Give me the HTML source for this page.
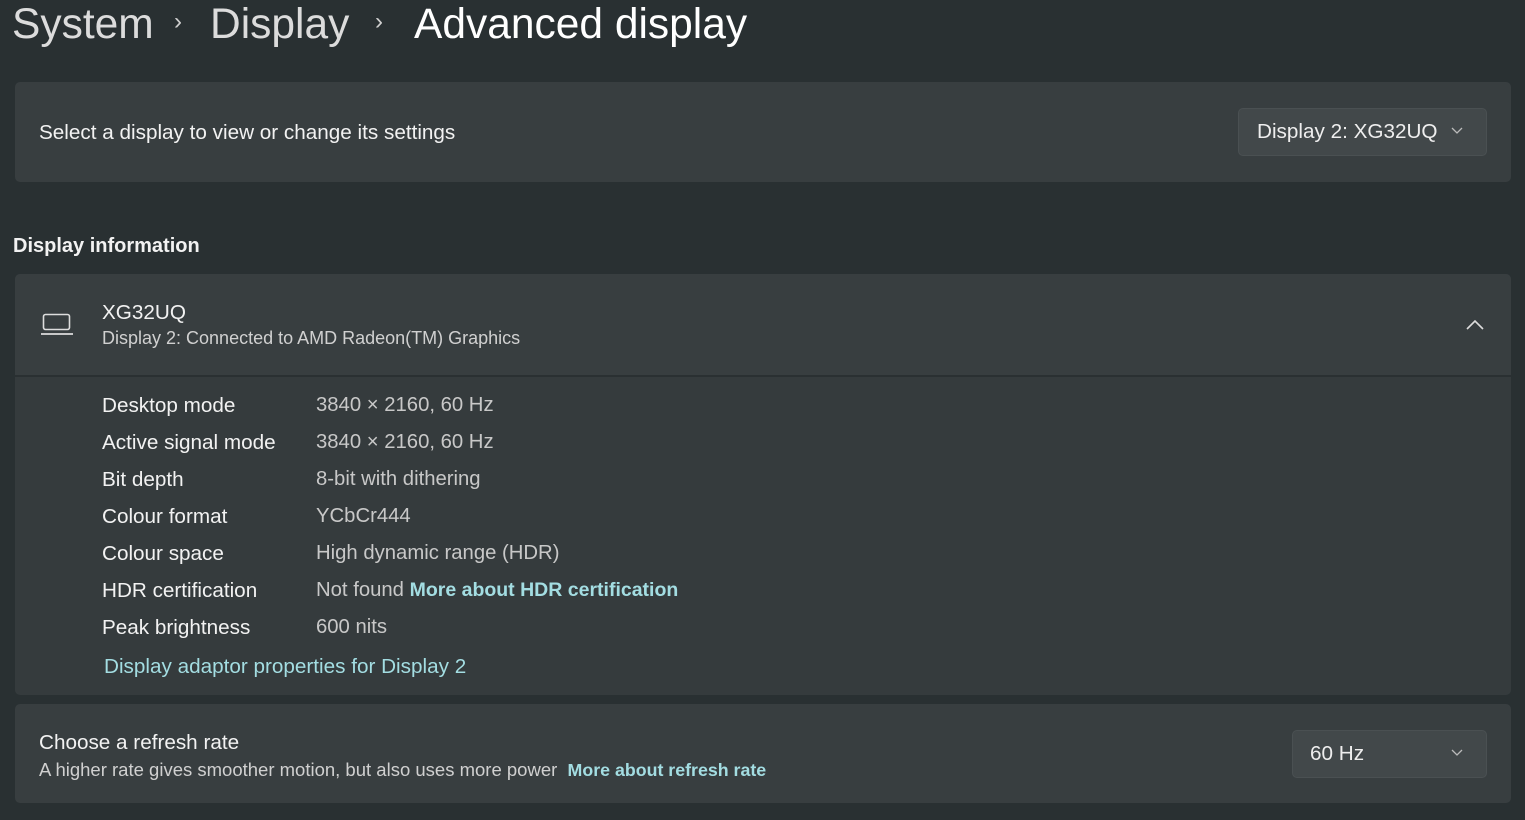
<!DOCTYPE html>
<html><head><meta charset="utf-8"><style>
*{margin:0;padding:0;box-sizing:border-box}
body{width:1525px;height:820px;background:#293032;font-family:"Liberation Sans",sans-serif;color:#fff;position:relative;overflow:hidden}
.a{position:absolute;white-space:nowrap}
.card{position:absolute;left:15px;width:1496px;background:#383e40;border-radius:5px}
.t{font-size:20.7px;color:#f2f2f2}
.v{font-size:20.3px;color:#c8c8c8}
.s{font-size:18px;color:#d0d0d0}
.link{color:#a3dde2}
.dd{position:absolute;background:#42484a;border-radius:5px;border:1px solid #4a5052}
</style></head><body>
<div class="a" style="left:12px;top:0px;font-size:42.5px;color:#dcdcdc;line-height:50px">System</div>
<div class="a" style="left:174px;top:8px;font-size:24px;color:#cfcfcf">›</div>
<div class="a" style="left:210px;top:0px;font-size:42.5px;color:#dcdcdc;line-height:50px">Display</div>
<div class="a" style="left:375px;top:8px;font-size:24px;color:#cfcfcf">›</div>
<div class="a" style="left:414px;top:0px;font-size:42.5px;color:#fff;line-height:50px">Advanced display</div>

<div class="card" style="top:82px;height:100px"></div>
<div class="a t" style="left:39px;top:121px">Select a display to view or change its settings</div>
<div class="dd" style="left:1238px;top:108px;width:249px;height:48px"></div>
<div class="a t" style="left:1257px;top:120px;color:#eee">Display 2: XG32UQ</div>
<svg class="a" style="left:1450px;top:126px" width="14" height="10"><path d="M2 2l5 5 5-5" stroke="#bbb" stroke-width="1.3" fill="none"/></svg>

<div class="a" style="left:13px;top:235px;font-size:20px;font-weight:bold;color:#f2f2f2">Display information</div>

<div class="card" style="top:274px;height:421px;background:#353b3d"></div>
<div class="card" style="top:274px;height:101px;border-radius:5px 5px 0 0"></div>
<div class="a" style="left:15px;top:375px;width:1496px;height:2px;background:#2a3032"></div>
<svg class="a" style="left:40px;top:312px" width="34" height="26"><rect x="3.5" y="2.5" width="26" height="15" rx="2" stroke="#ddd" stroke-width="1.6" fill="none"/><path d="M1 22h32" stroke="#ddd" stroke-width="1.8"/></svg>
<div class="a t" style="left:102px;top:301px">XG32UQ</div>
<div class="a s" style="left:102px;top:328px">Display 2: Connected to AMD Radeon(TM) Graphics</div>
<svg class="a" style="left:1465px;top:318px" width="20" height="14"><path d="M2 11l8-8 8 8" stroke="#ddd" stroke-width="1.6" fill="none"/></svg>

<div class="a t" style="left:102px;top:394px">Desktop mode</div><div class="a v" style="left:316px;top:394px">3840 × 2160, 60 Hz</div>
<div class="a t" style="left:102px;top:431px">Active signal mode</div><div class="a v" style="left:316px;top:431px">3840 × 2160, 60 Hz</div>
<div class="a t" style="left:102px;top:468px">Bit depth</div><div class="a v" style="left:316px;top:468px">8-bit with dithering</div>
<div class="a t" style="left:102px;top:505px">Colour format</div><div class="a v" style="left:316px;top:505px">YCbCr444</div>
<div class="a t" style="left:102px;top:542px">Colour space</div><div class="a v" style="left:316px;top:542px">High dynamic range (HDR)</div>
<div class="a t" style="left:102px;top:579px">HDR certification</div><div class="a v" style="left:316px;top:579px">Not found <b class="link" style="font-size:19.5px">More about HDR certification</b></div>
<div class="a t" style="left:102px;top:616px">Peak brightness</div><div class="a v" style="left:316px;top:616px">600 nits</div>
<div class="a t link" style="left:104px;top:655px;color:#a3dde2">Display adaptor properties for Display 2</div>

<div class="card" style="top:704px;height:99px"></div>
<div class="a t" style="left:39px;top:731px">Choose a refresh rate</div>
<div class="a s" style="left:39px;top:759px;font-size:18.5px">A higher rate gives smoother motion, but also uses more power&nbsp; <b class="link" style="font-size:17.8px">More about refresh rate</b></div>
<div class="dd" style="left:1292px;top:730px;width:195px;height:48px"></div>
<div class="a t" style="left:1310px;top:742px;color:#eee">60 Hz</div>
<svg class="a" style="left:1450px;top:748px" width="14" height="10"><path d="M2 2l5 5 5-5" stroke="#bbb" stroke-width="1.3" fill="none"/></svg>
</body></html>
